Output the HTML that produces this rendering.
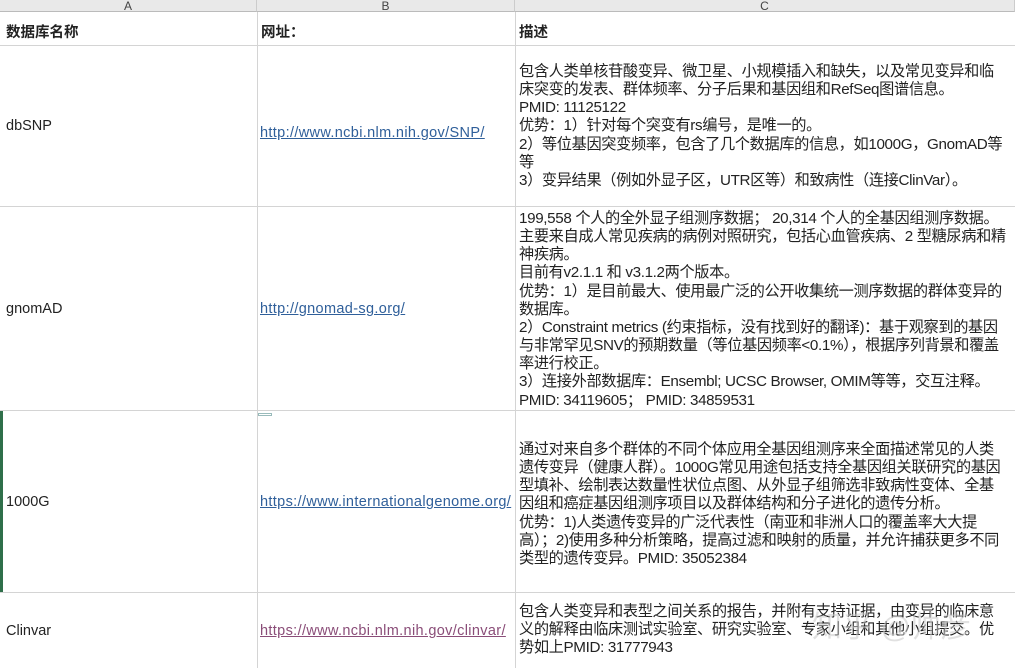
<!DOCTYPE html>
<html><head><meta charset="utf-8"><style>
body{margin:0;width:1015px;height:668px;overflow:hidden;background:#fff;position:relative;font-family:"Liberation Sans","Noto Sans CJK SC",sans-serif;color:#222;}
.hd{position:absolute;top:0;height:12px;background:#e9e9e9;border-bottom:1px solid #bbb;font-size:12px;line-height:12px;text-align:center;color:#444;border-right:1px solid #ccc;box-sizing:border-box}
.v{position:absolute;top:12px;bottom:0;width:1px;background:#d4d4d4}
.h{position:absolute;left:0;right:0;height:1px;background:#d4d4d4}
.t{position:absolute;font-size:15.2px;line-height:18.15px;white-space:nowrap;letter-spacing:-0.35px}
.a{position:absolute;left:6px;font-size:14.5px;white-space:nowrap}
.u{position:absolute;left:260px;font-size:14.5px;white-space:nowrap;color:#2f5f9a;text-decoration:underline;letter-spacing:0.35px}
</style></head><body>
<div class="hd" style="left:0;width:257px">A</div>
<div class="hd" style="left:257px;width:258px">B</div>
<div class="hd" style="left:515px;width:500px">C</div>
<div class="v" style="left:257px"></div>
<div class="v" style="left:515px"></div>
<div class="h" style="top:45px"></div>
<div class="h" style="top:206px"></div>
<div class="h" style="top:410px"></div>
<div class="h" style="top:592px"></div>
<div style="position:absolute;left:0;top:411px;width:3px;height:181px;background:#2f6f4a"></div>
<div style="position:absolute;left:258px;top:413px;width:14px;height:3px;border:1px solid #9bb;box-sizing:border-box"></div>

<div class="a" style="top:21px;font-weight:bold">数据库名称</div>
<div class="a" style="top:21px;left:261px;font-weight:bold">网址：</div>
<div class="a" style="top:21px;left:519px;font-weight:bold">描述</div>

<div class="a" style="top:118px">dbSNP</div>
<div class="u" style="top:125px">http://www.ncbi.nlm.nih.gov/SNP/</div>
<div class="t" style="left:519px;top:63px">包含人类单核苷酸变异、微卫星、小规模插入和缺失，以及常见变异和临<br>床突变的发表、群体频率、分子后果和基因组和RefSeq图谱信息。<br>PMID: 11125122<br>优势：1）针对每个突变有rs编号，是唯一的。<br>2）等位基因突变频率，包含了几个数据库的信息，如1000G，GnomAD等<br>等<br>3）变异结果（例如外显子区，UTR区等）和致病性（连接ClinVar）。</div>

<div class="a" style="top:301px">gnomAD</div>
<div class="u" style="top:301px">http://gnomad-sg.org/</div>
<div class="t" style="left:519px;top:210px">199,558 个人的全外显子组测序数据； 20,314 个人的全基因组测序数据。<br>主要来自成人常见疾病的病例对照研究，包括心血管疾病、2 型糖尿病和精<br>神疾病。<br>目前有v2.1.1 和 v3.1.2两个版本。<br>优势：1）是目前最大、使用最广泛的公开收集统一测序数据的群体变异的<br>数据库。<br>2）Constraint metrics (约束指标，没有找到好的翻译)：基于观察到的基因<br>与非常罕见SNV的预期数量（等位基因频率&lt;0.1%），根据序列背景和覆盖<br>率进行校正。<br>3）连接外部数据库：Ensembl; UCSC Browser, OMIM等等，交互注释。<br>PMID: 34119605； PMID: 34859531</div>

<div class="a" style="top:494px">1000G</div>
<div class="u" style="top:494px">https://www.internationalgenome.org/</div>
<div class="t" style="left:519px;top:441px">通过对来自多个群体的不同个体应用全基因组测序来全面描述常见的人类<br>遗传变异（健康人群）。1000G常见用途包括支持全基因组关联研究的基因<br>型填补、绘制表达数量性状位点图、从外显子组筛选非致病性变体、全基<br>因组和癌症基因组测序项目以及群体结构和分子进化的遗传分析。<br>优势：1)人类遗传变异的广泛代表性（南亚和非洲人口的覆盖率大大提<br>高）；2)使用多种分析策略，提高过滤和映射的质量，并允许捕获更多不同<br>类型的遗传变异。PMID: 35052384</div>

<div class="a" style="top:623px">Clinvar</div>
<div class="u" style="top:623px;color:#8a4d78">https://www.ncbi.nlm.nih.gov/clinvar/</div>
<div class="t" style="left:519px;top:603px">包含人类变异和表型之间关系的报告，并附有支持证据，由变异的临床意<br>义的解释由临床测试实验室、研究实验室、专家小组和其他小组提交。优<br>势如上PMID: 31777943</div>
<div style="position:absolute;left:812px;top:602px;font-size:30px;color:rgba(200,200,200,0.55);white-space:nowrap">知乎 @帅彦</div>
</body></html>
